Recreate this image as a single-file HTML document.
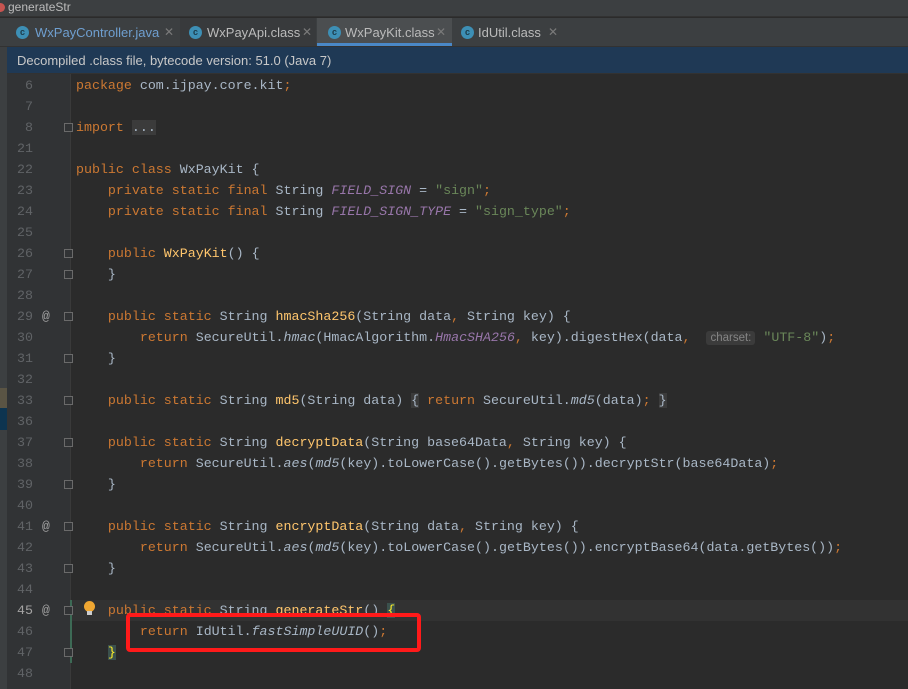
<!DOCTYPE html><html><head><meta charset="utf-8"><style>
*{margin:0;padding:0;box-sizing:border-box}
body{width:908px;height:689px;overflow:hidden;background:#2b2b2b;font-family:"Liberation Sans",sans-serif;position:relative}
.top{position:absolute;left:0;top:0;width:908px;height:17px;background:#3c3f41;border-bottom:1px solid #323232;color:#bbb;font-size:12px;line-height:15px;padding-left:8px}
.tabs{position:absolute;left:0;top:18px;width:908px;height:29px;background:#3c3f41;border-bottom:1px solid #323232}
.tab{position:absolute;top:0;height:28px}
.t{position:absolute;top:0;font-size:13px;color:#bbb;line-height:29px;white-space:nowrap}
.ic{position:absolute;top:8px;width:13px;height:13px;border-radius:50%;background:#3d8fb5;color:#1c3b4a;font-size:9px;line-height:13px;text-align:center;font-weight:bold}
.x{position:absolute;top:0;color:#7a7a7a;font-size:12px;line-height:29px}
.banner{position:absolute;left:7px;top:47px;width:901px;height:27px;background:#1f3955;color:#c8c8c8;font-size:13px;line-height:27px;padding-left:10px;border-bottom:1px solid #323232}
.strip{position:absolute;left:0;top:47px;width:7px;height:642px;background:#3c3f41}
.gut{position:absolute;left:7px;top:74px;width:64px;height:615px;background:#313335}
.vl{position:absolute;left:70px;top:74px;width:1px;height:615px;background:#3a3a3a}
.ln,.cl,.at,.fold{margin-top:1px}
.ln{position:absolute;left:7px;width:26px;text-align:right;color:#606366;font:13.3px "Liberation Mono",monospace;line-height:21px}
.cl{position:absolute;left:76px;color:#a9b7c6;font:13.3px "Liberation Mono",monospace;line-height:21px;white-space:pre}
.k{color:#cc7832}.s{color:#6a8759}.i{font-style:italic}.f{color:#ffc66d}.p{color:#9876aa;font-style:italic}
.at{position:absolute;left:42px;color:#a0a0a0;font:13px "Liberation Mono",monospace;line-height:21px}
.fold{position:absolute;left:64px;width:9px;height:9px;border:1px solid #6a6a6a;background:#313335}
.hint{background:#3b3b3b;color:#858585;font-family:"Liberation Sans",sans-serif;font-size:11.5px;border-radius:3px;padding:1px 4px}
</style></head><body>
<div class="top"><span style="position:absolute;left:-4px;top:3px;width:9px;height:9px;border-radius:50%;background:#c75450"></span>generateStr</div>
<div class="tabs">
<div class="tab" style="left:180px;width:136px;background:#383a3c"></div>
<div class="tab" style="left:317px;width:135px;background:#4b4e50;border-bottom:3px solid #4a88c7"></div>
<span class="ic" style="left:16px">c</span><span class="t" style="left:35px;color:#6f9fd0">WxPayController.java</span><span class="x" style="left:164px">✕</span>
<span class="ic" style="left:189px">c</span><span class="t" style="left:207px">WxPayApi.class</span><span class="x" style="left:302px">✕</span>
<span class="ic" style="left:328px">c</span><span class="t" style="left:345px">WxPayKit.class</span><span class="x" style="left:436px">✕</span>
<span class="ic" style="left:461px">c</span><span class="t" style="left:478px">IdUtil.class</span><span class="x" style="left:548px">✕</span>
</div>
<div class="strip"><div style="position:absolute;top:341px;width:7px;height:20px;background:#5a5444"></div><div style="position:absolute;top:361px;width:7px;height:22px;background:#0d3450"></div></div>
<div class="banner">Decompiled .class file, bytecode version: 51.0 (Java 7)</div>
<div class="gut"></div>
<div style="position:absolute;left:71px;top:600px;width:837px;height:21px;background:#323232"></div>
<div class="vl"></div>
<div style="position:absolute;left:70px;top:600px;width:2px;height:63px;background:#3d6a55"></div>

<div class="ln" style="top:74px">6</div><div class="cl" style="top:74px"><span class="k">package</span> com.ijpay.core.kit<span class="k">;</span></div>
<div class="ln" style="top:95px">7</div>
<div class="ln" style="top:116px">8</div><div class="fold" style="top:122px"></div><div class="cl" style="top:116px"><span class="k">import</span> <span style="background:#3b3b3b">...</span></div>
<div class="ln" style="top:137px">21</div>
<div class="ln" style="top:158px">22</div><div class="cl" style="top:158px"><span class="k">public class</span> WxPayKit {</div>
<div class="ln" style="top:179px">23</div><div class="cl" style="top:179px">    <span class="k">private static final</span> String <span class="p">FIELD_SIGN</span> = <span class="s">"sign"</span><span class="k">;</span></div>
<div class="ln" style="top:200px">24</div><div class="cl" style="top:200px">    <span class="k">private static final</span> String <span class="p">FIELD_SIGN_TYPE</span> = <span class="s">"sign_type"</span><span class="k">;</span></div>
<div class="ln" style="top:221px">25</div>
<div class="ln" style="top:242px">26</div><div class="fold" style="top:248px"></div><div class="cl" style="top:242px">    <span class="k">public</span> <span class="f">WxPayKit</span>() {</div>
<div class="ln" style="top:263px">27</div><div class="fold" style="top:269px"></div><div class="cl" style="top:263px">    }</div>
<div class="ln" style="top:284px">28</div>
<div class="ln" style="top:305px">29</div><div class="at" style="top:305px">@</div><div class="fold" style="top:311px"></div><div class="cl" style="top:305px">    <span class="k">public static</span> String <span class="f">hmacSha256</span>(String data<span class="k">,</span> String key) {</div>
<div class="ln" style="top:326px">30</div><div class="cl" style="top:326px">        <span class="k">return</span> SecureUtil.<span class="i">hmac</span>(HmacAlgorithm.<span class="p">HmacSHA256</span><span class="k">,</span> key).digestHex(data<span class="k">,</span>  <span class="hint">charset:</span> <span class="s">"UTF-8"</span>)<span class="k">;</span></div>
<div class="ln" style="top:347px">31</div><div class="fold" style="top:353px"></div><div class="cl" style="top:347px">    }</div>
<div class="ln" style="top:368px">32</div>
<div class="ln" style="top:389px">33</div><div class="fold" style="top:395px"></div><div class="cl" style="top:389px">    <span class="k">public static</span> String <span class="f">md5</span>(String data) <span style="background:#3b3b3b">{</span> <span class="k">return</span> SecureUtil.<span class="i">md5</span>(data)<span class="k">;</span> <span style="background:#3b3b3b">}</span></div>
<div class="ln" style="top:410px">36</div>
<div class="ln" style="top:431px">37</div><div class="fold" style="top:437px"></div><div class="cl" style="top:431px">    <span class="k">public static</span> String <span class="f">decryptData</span>(String base64Data<span class="k">,</span> String key) {</div>
<div class="ln" style="top:452px">38</div><div class="cl" style="top:452px">        <span class="k">return</span> SecureUtil.<span class="i">aes</span>(<span class="i">md5</span>(key).toLowerCase().getBytes()).decryptStr(base64Data)<span class="k">;</span></div>
<div class="ln" style="top:473px">39</div><div class="fold" style="top:479px"></div><div class="cl" style="top:473px">    }</div>
<div class="ln" style="top:494px">40</div>
<div class="ln" style="top:515px">41</div><div class="at" style="top:515px">@</div><div class="fold" style="top:521px"></div><div class="cl" style="top:515px">    <span class="k">public static</span> String <span class="f">encryptData</span>(String data<span class="k">,</span> String key) {</div>
<div class="ln" style="top:536px">42</div><div class="cl" style="top:536px">        <span class="k">return</span> SecureUtil.<span class="i">aes</span>(<span class="i">md5</span>(key).toLowerCase().getBytes()).encryptBase64(data.getBytes())<span class="k">;</span></div>
<div class="ln" style="top:557px">43</div><div class="fold" style="top:563px"></div><div class="cl" style="top:557px">    }</div>
<div class="ln" style="top:578px">44</div>
<div class="ln" style="top:599px;color:#a4a3a3">45</div><div class="at" style="top:599px">@</div><div class="fold" style="top:605px"></div>
<div style="position:absolute;left:84px;top:601px;width:11px;height:11px;border-radius:50%;background:#f0a732"></div><div style="position:absolute;left:87px;top:611px;width:5px;height:4px;background:#ccc"></div>
<div class="cl" style="top:599px">    <span class="k">public static</span> String <span class="f">generateStr</span>() <span style="background:#3b514d;color:#ffef28">{</span></div>
<div class="ln" style="top:620px">46</div><div class="cl" style="top:620px">        <span class="k">return</span> IdUtil.<span class="i">fastSimpleUUID</span>()<span class="k">;</span></div>
<div class="ln" style="top:641px">47</div><div class="fold" style="top:647px"></div><div class="cl" style="top:641px">    <span style="background:#3b514d;color:#ffef28">}</span></div>
<div class="ln" style="top:662px">48</div>
<div style="position:absolute;left:126px;top:613px;width:295px;height:39px;border:4px solid #ff1a1a;border-radius:4px"></div>
</body></html>
